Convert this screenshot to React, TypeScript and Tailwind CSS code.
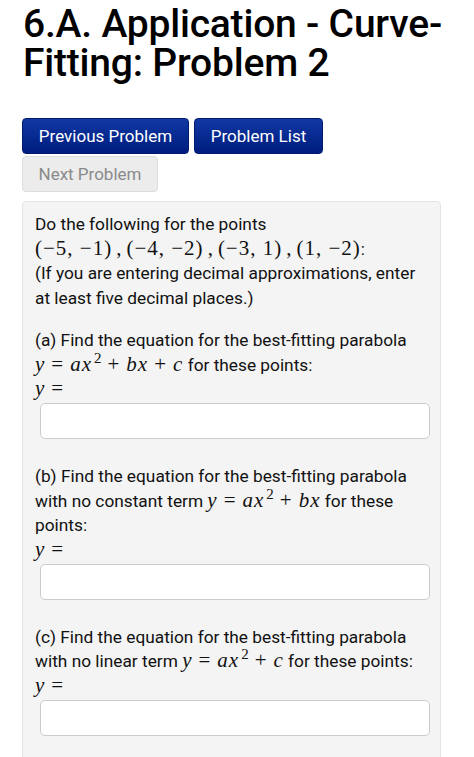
import type { ReactNode } from "react";

// math bits, MathJax-like serif
function M({ children }: { children: ReactNode }) {
  return (
    <span className="font-['Liberation_Serif','DejaVu_Serif',serif] text-[21px] leading-none tracking-[1px] whitespace-nowrap">
      {children}
    </span>
  );
}

function V({ children }: { children: ReactNode }) {
  return <i className="tracking-[1px]">{children}</i>;
}

function Sq() {
  return <span className="relative -top-[8px] ml-[2px] text-[15px] leading-none tracking-normal">2</span>;
}

function Eq() {
  return <span className="mx-[6px]">=</span>;
}

function Plus() {
  return <span className="mx-[6px]">+</span>;
}

function Comma() {
  return <span className="mx-[4px]">,</span>;
}

function AnswerRow() {
  return (
    <div>
      <div className="h-[24px] leading-[24px]">
        <M>
          <V>y</V>
          <Eq />
        </M>
      </div>
      <div className="ml-[5px] mt-[2px] h-[36px] w-[390px] rounded-[5px] border border-[#cccccc] bg-white" />
    </div>
  );
}

export default function App() {
  return (
    <div className="min-h-screen bg-white font-['Roboto','Liberation_Sans',sans-serif] text-[#111]">
      <div className="px-[22px] pt-[5px]">
        <h1 className="pl-px text-[39px] font-medium leading-[39px] tracking-[-0.2px] text-black">
          6.A. Application - Curve-Fitting: Problem 2
        </h1>

        <div className="mt-[35px] flex flex-wrap gap-x-[5px] gap-y-px text-[17px] leading-none">
          <button className="h-[36px] w-[167px] rounded-[4px] border border-[#001a6e] bg-gradient-to-b from-[#1238a4] to-[#001c7e] text-white">
            Previous Problem
          </button>
          <button className="h-[36px] w-[129px] rounded-[4px] border border-[#001a6e] bg-gradient-to-b from-[#1238a4] to-[#001c7e] text-white">
            Problem List
          </button>
          <div className="basis-full" />
          <button className="h-[36px] w-[136px] rounded-[4px] border border-[#dcdcdc] bg-[#ececec] text-[#8a8a8a]">
            Next Problem
          </button>
        </div>

        <div className="mt-[9px] w-[419px] rounded-[4px] border border-[#e4e4e4] bg-[#f4f4f4] px-[12px] pt-[10px] pb-[30px] text-[17.3px] leading-[24.5px]">
          <p>
            Do the following for the points
            <br />
            <M>
              (−5, −1)
              <Comma />
              (−4, −2)
              <Comma />
              (−3, 1)
              <Comma />
              (1, −2)
            </M>
            :
            <br />
            (If you are entering decimal approximations, enter at least five decimal places.)
          </p>

          <div className="mt-[18px]">
            <p>
              (a) Find the equation for the best-fitting parabola
              <br />
              <M>
                <V>y</V>
                <Eq />
                <V>ax</V>
                <Sq />
                <Plus />
                <V>bx</V>
                <Plus />
                <V>c</V>
              </M>{" "}
              for these points:
            </p>
            <AnswerRow />
          </div>

          <div className="mt-[25px]">
            <p>
              (b) Find the equation for the best-fitting parabola with no constant term{" "}
              <M>
                <V>y</V>
                <Eq />
                <V>ax</V>
                <Sq />
                <Plus />
                <V>bx</V>
              </M>{" "}
              for these points:
            </p>
            <AnswerRow />
          </div>

          <div className="mt-[25px]">
            <p>
              (c) Find the equation for the best-fitting parabola with no linear term{" "}
              <M>
                <V>y</V>
                <Eq />
                <V>ax</V>
                <Sq />
                <Plus />
                <V>c</V>
              </M>{" "}
              for these points:
            </p>
            <AnswerRow />
          </div>
        </div>
      </div>
    </div>
  );
}
